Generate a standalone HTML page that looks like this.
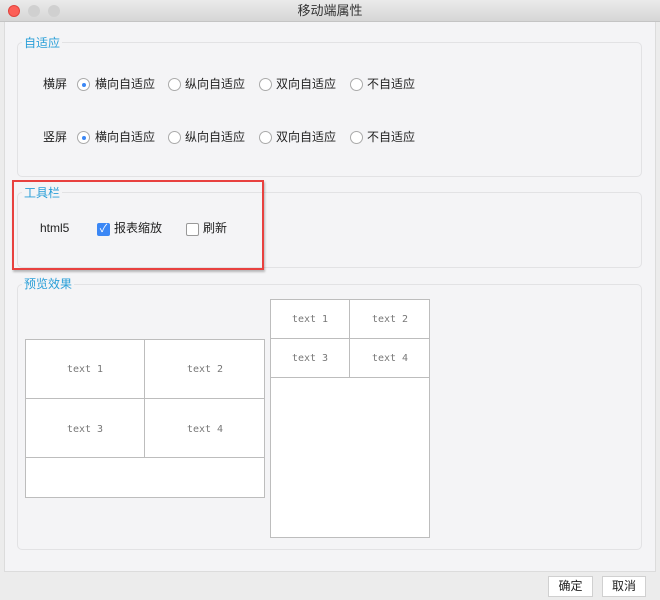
<!DOCTYPE html><html><head><meta charset="utf-8"><style>
*{margin:0;padding:0;box-sizing:border-box}
body{width:660px;height:600px;background:#ececec;font-family:"Liberation Sans","Noto Sans CJK SC",sans-serif;font-size:12px;line-height:16px;color:#222;position:relative;overflow:hidden}
.a{position:absolute}
.title{left:0;top:0;width:660px;height:22px;background:linear-gradient(#ebebeb,#d6d6d6);border-bottom:1px solid #c4c4c4;text-align:center;line-height:22px;font-size:13px;color:#333}
.dot{width:12px;height:12px;border-radius:50%;top:5px}
.panel{left:4px;top:22px;width:652px;height:550px;background:#f4f4f6;border:1px solid #dcdcdc;border-top:none}
.grp{border:1px solid #e2e2e4;border-radius:5px}
.lg{color:#2a9fd8;background:#f4f4f6;padding:0 2px;font-size:12px;line-height:14px}
.radio{width:13px;height:13px;border-radius:50%;border:1px solid #aaa;background:#fff}
.radio.on::after{content:"";position:absolute;left:3.5px;top:3.5px;width:4px;height:4px;border-radius:50%;background:#3b87f5}
.tb{background:#fff;border:1px solid #bdbdbd}
.c{position:absolute;font-family:"DejaVu Sans Mono","Liberation Mono",monospace;font-size:10px;color:#777;text-align:center}
.btn{height:21px;background:#fff;border:1px solid #d0d0d0;text-align:center;line-height:19px;font-size:12px}
</style></head><body>
<div class="a title">移动端属性</div>
<div class="a dot" style="left:8px;background:#fc5f57;border:1px solid #e0443e"></div>
<div class="a dot" style="left:28px;background:#d0d0d0"></div>
<div class="a dot" style="left:48px;background:#d0d0d0"></div>
<div class="a panel"></div>
<div class="a grp" style="left:17px;top:42px;width:625px;height:135px"></div>
<div class="a lg" style="left:22px;top:36px">自适应</div>
<div class="a" style="left:43px;top:76px">横屏</div>
<div class="a radio on" style="left:77px;top:78px"></div><div class="a" style="left:95px;top:76px">横向自适应</div>
<div class="a radio" style="left:168px;top:78px"></div><div class="a" style="left:185px;top:76px">纵向自适应</div>
<div class="a radio" style="left:259px;top:78px"></div><div class="a" style="left:276px;top:76px">双向自适应</div>
<div class="a radio" style="left:350px;top:78px"></div><div class="a" style="left:367px;top:76px">不自适应</div>
<div class="a" style="left:43px;top:129px">竖屏</div>
<div class="a radio on" style="left:77px;top:131px"></div><div class="a" style="left:95px;top:129px">横向自适应</div>
<div class="a radio" style="left:168px;top:131px"></div><div class="a" style="left:185px;top:129px">纵向自适应</div>
<div class="a radio" style="left:259px;top:131px"></div><div class="a" style="left:276px;top:129px">双向自适应</div>
<div class="a radio" style="left:350px;top:131px"></div><div class="a" style="left:367px;top:129px">不自适应</div>
<div class="a grp" style="left:17px;top:192px;width:625px;height:76px"></div>
<div class="a lg" style="left:22px;top:186px">工具栏</div>
<div class="a" style="left:40px;top:220px">html5</div>
<div class="a" style="left:97px;top:223px;width:13px;height:13px;background:#3b87f5;border-radius:2px;color:#fff;font-size:11px;line-height:13px;text-align:center">✓</div>
<div class="a" style="left:114px;top:220px">报表缩放</div>
<div class="a" style="left:186px;top:223px;width:13px;height:13px;background:#fff;border:1px solid #999;border-radius:2px"></div>
<div class="a" style="left:203px;top:220px">刷新</div>
<div class="a" style="left:12px;top:180px;width:252px;height:90px;border:2px solid #e8413f;box-shadow:1px 2px 2px rgba(0,0,0,.25)"></div>
<div class="a grp" style="left:17px;top:284px;width:625px;height:266px"></div>
<div class="a lg" style="left:22px;top:277px">预览效果</div>
<div class="a tb" style="left:25px;top:339px;width:240px;height:159px"></div>
<div class="a" style="left:25px;top:398px;width:240px;height:1px;background:#bdbdbd"></div>
<div class="a" style="left:25px;top:457px;width:240px;height:1px;background:#bdbdbd"></div>
<div class="a" style="left:144px;top:339px;width:1px;height:119px;background:#bdbdbd"></div>
<div class="c" style="left:25px;top:362px;width:120px">text 1</div>
<div class="c" style="left:145px;top:362px;width:120px">text 2</div>
<div class="c" style="left:25px;top:422px;width:120px">text 3</div>
<div class="c" style="left:145px;top:422px;width:120px">text 4</div>
<div class="a tb" style="left:270px;top:299px;width:160px;height:239px"></div>
<div class="a" style="left:270px;top:338px;width:160px;height:1px;background:#bdbdbd"></div>
<div class="a" style="left:270px;top:377px;width:160px;height:1px;background:#bdbdbd"></div>
<div class="a" style="left:349px;top:299px;width:1px;height:79px;background:#bdbdbd"></div>
<div class="c" style="left:270px;top:312px;width:80px">text 1</div>
<div class="c" style="left:350px;top:312px;width:80px">text 2</div>
<div class="c" style="left:270px;top:351px;width:80px">text 3</div>
<div class="c" style="left:350px;top:351px;width:80px">text 4</div>
<div class="a btn" style="left:548px;top:576px;width:45px">确定</div>
<div class="a btn" style="left:602px;top:576px;width:44px">取消</div>
</body></html>
